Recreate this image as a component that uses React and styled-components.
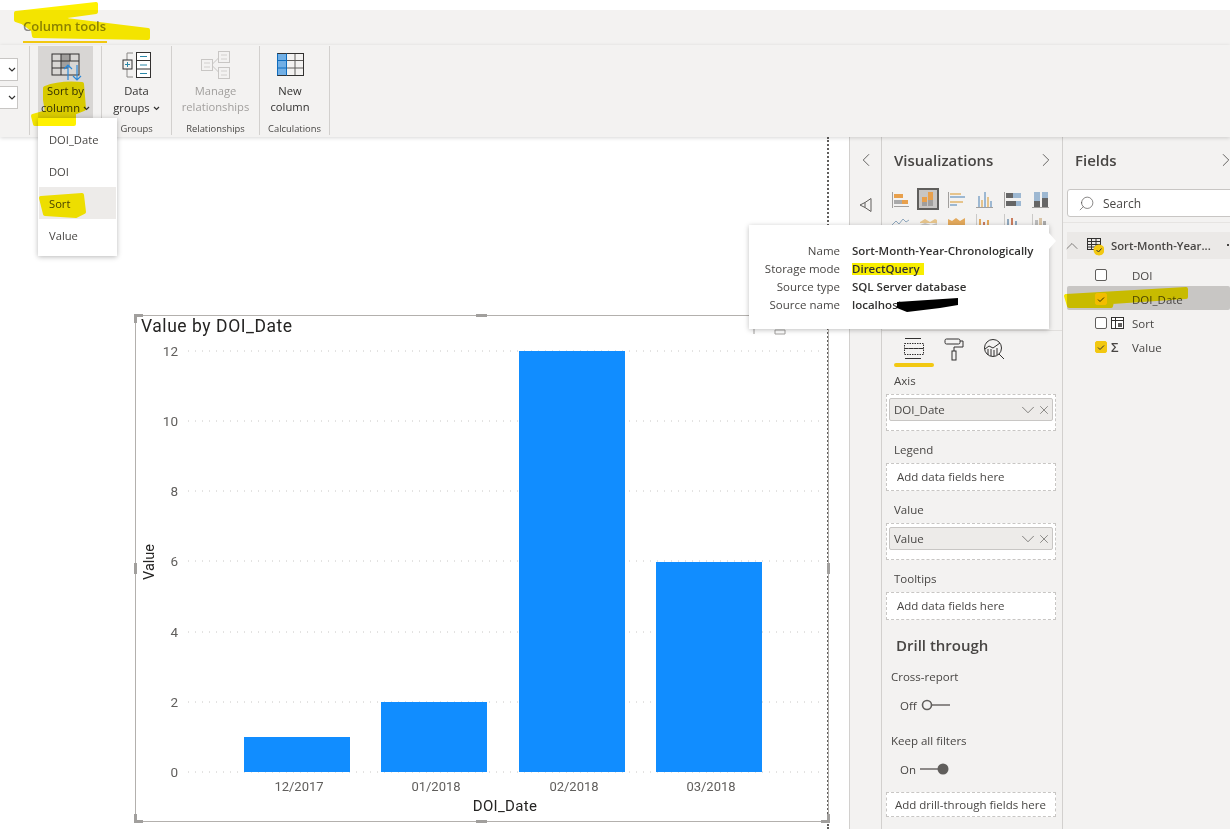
import React from "react";
import styled, { createGlobalStyle } from "styled-components";
import { ChevronLeft, ChevronRight, ChevronUp, ChevronDown, X, Search } from "lucide-react";

const Global = createGlobalStyle`
  html, body { margin: 0; padding: 0; background: #fff; }
  body { font-family: "Open Sans", "Noto Sans", sans-serif; color: #323130; overflow: hidden; }
  * { box-sizing: border-box; }
`;

const Page = styled.div`
  position: relative;
  width: 1230px;
  height: 829px;
  overflow: hidden;
  display: flex;
  flex-direction: column;
  padding-top: 10px;
`;
const TabBar = styled.div`
  height: 35px;
  background: #f3f2f1;
  padding: 0 23px;
  flex: none;
`;
const Tab = styled.div`
  display: inline-block;
  height: 33px;
  font-size: 13px;
  line-height: 32px;
  font-weight: 600;
  color: #8a8886;
  border-bottom: 2px solid #f2c811;
  width: 84px;
  white-space: nowrap;
`;
const Ribbon = styled.div`
  flex: none;
  height: 92px;
  background: #f3f2f1;
  display: flex;
  box-shadow: 0 1px 4px rgba(0, 0, 0, 0.16);
  position: relative;
  z-index: 2;
`;
const Group = styled.div`
  width: ${(p) => p.$w}px;
  display: flex;
  flex-direction: column;
  border-right: 1px solid #d2d0ce;
  margin: 1px 0 2px;
  position: relative;
`;
const Buttons = styled.div`
  flex: 1;
  display: flex;
  justify-content: ${(p) => (p.$left ? "flex-start" : "center")};
`;
const RibbonButton = styled.div`
  width: ${(p) => p.$w}px;
  margin-left: ${(p) => p.$ml || 0}px;
  height: 72px;
  padding-top: 6px;
  background: ${(p) => (p.$on ? "#d8d6d4" : "transparent")};
  display: flex;
  flex-direction: column;
  align-items: center;
  font-size: 11.2px;
  line-height: 16px;
  text-align: center;
  white-space: nowrap;
  color: ${(p) => (p.$off ? "#a19f9d" : "#323130")};
  svg { flex: none; overflow: visible; }
`;
const ButtonIcon = styled.div`
  height: 25px;
  margin-bottom: 6px;
  display: flex;
  justify-content: center;
  align-items: center;
`;
const GroupLabel = styled.div`
  height: 18px;
  font-size: 9.4px;
  line-height: 22px;
  text-align: center;
  color: #484644;
  white-space: nowrap;
`;
const Stubs = styled.div`
  display: flex;
  flex-direction: column;
  gap: 5px;
  padding-top: 12px;
`;
const Stub = styled.div`
  width: 18px;
  height: 23px;
  background: #fff;
  border: 1px solid #c8c6c4;
  border-left: none;
  display: flex;
  align-items: center;
  justify-content: flex-end;
  padding-right: 1px;
  color: #323130;
`;
const TinyCaret = styled.span`
  display: inline-block;
  margin-left: 3px;
  vertical-align: 1px;
`;
const Workspace = styled.div`
  flex: 1;
  min-height: 0;
  display: flex;
`;
const CanvasArea = styled.div`
  width: 850px;
  flex: none;
  background: #fff;
  border-right: 1px solid #d2d0ce;
  display: flex;
`;
const Report = styled.div`
  width: 829px;
  height: 100%;
  border-right: 2px dotted #605e5c;
  padding: 178px 0 0 135px;
`;
const Frame = styled.div`
  position: relative;
  width: 694px;
  height: 507px;
  border: 1px solid #b3b0ad;
  svg { display: block; }
`;
const Handle = styled.span`
  position: absolute;
  background: #a19f9d;
  ${(p) => p.$css}
`;
const Corner = styled.span`
  position: absolute;
  width: 9px;
  height: 9px;
  ${(p) => p.$css}
`;
const Strip = styled.div`
  width: 32px;
  flex: none;
  background: #f3f2f1;
  border-right: 1px solid #d2d0ce;
  display: flex;
  flex-direction: column;
  align-items: center;
  padding-top: 12px;
  gap: 27px;
  color: #484644;
`;
const Pane = styled.div`
  width: 181px;
  flex: none;
  background: #f3f2f1;
  border-right: 1px solid #d2d0ce;
  display: flex;
  flex-direction: column;
`;
const PaneHeader = styled.div`
  height: 46px;
  flex: none;
  display: flex;
  align-items: center;
  justify-content: space-between;
  padding: 0 ${(p) => p.$pr}px 0 12px;
  font-size: 15px;
  font-weight: 600;
  color: #484644;
`;
const VizGrid = styled.div`
  height: 147px;
  flex: none;
  padding: 7px 0 0 7px;
  display: grid;
  grid-template-columns: repeat(6, 28px);
  grid-auto-rows: 22px;
  align-content: start;
`;
const VizCell = styled.div`
  width: 22px;
  height: 22px;
  display: flex;
  align-items: center;
  justify-content: center;
  margin-top: -2px;
  border: 2px solid ${(p) => (p.$on ? "#5f5e5c" : "transparent")};
  background: ${(p) => (p.$on ? "#c8c6c4" : "transparent")};
  svg { flex: none; }
`;
const Tabs = styled.div`
  height: 36px;
  flex: none;
  display: flex;
  padding: 7px 0 0 12px;
  border-top: 1px solid #e1dfdd;
  margin-bottom: 7px;
`;
const TabIcon = styled.div`
  width: 40px;
  height: 29px;
  display: flex;
  flex-direction: column;
  align-items: center;
  gap: 2px;
  svg { flex: none; }
`;
const TabBarMark = styled.div`
  width: 40px;
  height: 4px;
  border-radius: 2px;
  background: ${(p) => (p.$on ? "#f2c811" : "transparent")};
`;
const WellLabel = styled.div`
  height: 16px;
  flex: none;
  font-size: 11.5px;
  line-height: 16px;
  padding-left: 12px;
  color: #484644;
`;
const Well = styled.div`
  flex: none;
  margin: 5px 0 11px 4px;
  width: 170px;
  height: ${(p) => p.$h}px;
  background: #fff;
  border: 1px dashed #c8c6c4;
  padding: ${(p) => (p.$filled ? "3px 2px" : `0 0 0 ${p.$pl || 10}px`)};
  font-size: 11.5px;
  line-height: ${(p) => p.$h - 2}px;
  color: #484644;
  white-space: nowrap;
`;
const Chip = styled.div`
  height: 23px;
  background: #edebe9;
  border: 1px solid #c8c6c4;
  border-radius: 2px;
  display: flex;
  align-items: center;
  padding: 0 1px 0 4px;
  font-size: 11.5px;
  line-height: 20px;
  color: #484644;
  span { flex: 1; }
  svg { flex: none; }
  svg + svg { margin-left: -2px; }
`;
const DrillHead = styled.div`
  flex: none;
  height: 22px;
  margin: 3px 0 13px;
  padding-left: 14px;
  font-size: 15px;
  line-height: 22px;
  font-weight: 600;
  color: #484644;
`;
const ToggleLabel = styled.div`
  flex: none;
  height: 16px;
  padding-left: 9px;
  font-size: 11.5px;
  line-height: 16px;
  color: #484644;
`;
const ToggleRow = styled.div`
  flex: none;
  height: 16px;
  margin: 12px 0 ${(p) => p.$mb}px;
  padding-left: 18px;
  display: flex;
  align-items: center;
  gap: 4px;
  font-size: 11.5px;
  color: #484644;
`;
const FieldsPane = styled.div`
  flex: 1;
  min-width: 0;
  background: #f3f2f1;
  display: flex;
  flex-direction: column;
  overflow: hidden;
`;
const SearchArea = styled.div`
  height: 40px;
  flex: none;
  padding: 6px 0 0 4px;
  border-bottom: 1px solid #e6e4e2;
`;
const SearchBox = styled.div`
  width: 180px;
  height: 28px;
  background: #fff;
  border: 1px solid #c8c6c4;
  border-radius: 3px;
  display: flex;
  align-items: center;
  gap: 8px;
  padding-left: 10px;
  font-size: 12px;
  color: #484644;
`;
const TableRow = styled.div`
  margin: 9px 0 4px 4px;
  height: 27px;
  background: #ebe9e7;
  display: flex;
  align-items: center;
  padding-left: 2px;
  font-size: 11.3px;
  font-weight: 600;
  color: #484644;
  white-space: nowrap;
  position: relative;
  svg { flex: none; }
`;
const Dot = styled.span`
  position: absolute;
  left: 160px;
  top: 12px;
  width: 2px;
  height: 2px;
  background: #484644;
`;
const FieldRow = styled.div`
  height: 24px;
  margin-left: 4px;
  padding-left: 28px;
  padding-top: ${(p) => (p.$sel ? 2 : 0)}px;
  display: flex;
  align-items: center;
  font-size: 11.5px;
  color: #484644;
  background: ${(p) => (p.$sel ? "#c8c6c4" : "transparent")};
  border-radius: 2px;
  position: relative;
  top: ${(p) => (p.$sel ? -1 : 0)}px;
`;
const Check = styled.span`
  width: 12px;
  height: 12px;
  flex: none;
  border-radius: 2px;
  border: 1px solid ${(p) => (p.$on ? "#f2c811" : "#605e5c")};
  background: ${(p) => (p.$on ? "#f2c811" : "#fff")};
  display: flex;
  align-items: center;
  justify-content: center;
`;
const FieldIcon = styled.span`
  width: 25px;
  flex: none;
  padding-left: 4px;
  display: flex;
  align-items: center;
  font-size: 13px;
  font-weight: 600;
`;
const Menu = styled.div`
  position: absolute;
  left: 38px;
  top: 118px;
  width: 79px;
  height: 138px;
  background: #fff;
  box-shadow: 0 1px 5px rgba(0, 0, 0, 0.28);
  padding-top: 5px;
  z-index: 5;
`;
const MenuItem = styled.div`
  height: 32px;
  line-height: 33px;
  padding-left: 10px;
  font-size: 11.2px;
  color: #484644;
  margin: 0 1px;
  background: ${(p) => (p.$on ? "#edebe9" : "transparent")};
`;
const Tip = styled.div`
  position: absolute;
  left: 749px;
  top: 225px;
  width: 300px;
  height: 104px;
  background: #fff;
  box-shadow: 0 1px 5px rgba(0, 0, 0, 0.25);
  padding-top: 17px;
  z-index: 5;
  display: grid;
  grid-template-columns: 91px auto;
  column-gap: 12px;
  grid-auto-rows: 18px;
  font-size: 11.5px;
  line-height: 18px;
  white-space: nowrap;
  &::after {
    content: "";
    position: absolute;
    left: 300px;
    top: 8px;
    border-left: 7px solid #fff;
    border-top: 8px solid transparent;
    border-bottom: 8px solid transparent;
  }
`;
const TipKey = styled.div`
  text-align: right;
  color: #484644;
`;
const TipVal = styled.div`
  font-weight: 600;
  color: #323130;
  overflow: hidden;
`;
const Marked = styled.span`
  background: #f8ee00;
  display: inline-block;
  height: 12px;
  line-height: 12px;
  padding: 0 4px;
  margin-left: -4px;
  font-size: 11.5px;
`;
const Overlay = styled.svg`
  position: absolute;
  left: 0;
  top: 0;
  z-index: 10;
  pointer-events: none;
  mix-blend-mode: multiply;
`;
const YellowInk = styled.path`
  fill: #fff100;
  stroke: #fff100;
  stroke-width: 4;
  stroke-linejoin: round;
`;

const Caret = () => (
  <svg width="7" height="5" viewBox="0 0 7 5"><path d="M1 1l2.5 2.5L6 1" fill="none" stroke="#323130" strokeWidth="1.2" /></svg>
);

const SortIcon = () => (
  <svg width="30" height="24" viewBox="0 0 30 24">
    <rect x="10" y="1" width="9" height="14" fill="#a19f9d" />
    <rect x="1" y="1" width="27" height="21" fill="none" stroke="#323130" />
    <path d="M1 8h27M1 15h16M10 1v21M19 1v7" stroke="#323130" fill="none" />
    <path d="M17 27V12M13 16l4-4 4 4M26 12v15M22 23l4 4 4-4" stroke="#2b88d8" strokeWidth="1.2" fill="none" />
  </svg>
);
const DataGroupsIcon = () => (
  <svg width="29" height="26" viewBox="0 0 29 26">
    <path d="M11 1H5v24h6" fill="none" stroke="#8a8886" />
    <rect x="1" y="8" width="9" height="9" fill="#f3f2f1" stroke="#323130" />
    <path d="M3 12.5h5M5.5 10v5" stroke="#2b88a8" />
    <rect x="14.5" y="0.5" width="14" height="25" fill="#fff" stroke="#323130" />
    <path d="M14.5 8.5h14M14.5 17h14" stroke="#323130" />
    <path d="M18 4.5h7M18 13h7M18 21.5h7" stroke="#2b88a8" strokeWidth="1.2" />
  </svg>
);
const RelIcon = () => (
  <svg width="29" height="28" viewBox="0 0 29 28" fill="none" stroke="#c8c6c4">
    <rect x="0.5" y="8.5" width="11" height="11" />
    <rect x="17.5" y="0.5" width="11" height="11" />
    <rect x="17.5" y="16.5" width="11" height="11" />
    <path d="M11.5 13l6-6M11.5 15l6 6" />
    <path d="M3 12h6M3 16h6M20 4h6M20 8h6M20 20h6M20 24h6" stroke="#d2d0ce" />
  </svg>
);
const NewColIcon = () => (
  <svg width="27" height="23" viewBox="0 0 27 23">
    <rect x="0.5" y="0.5" width="9" height="22" fill="#71afe5" />
    <path d="M9.5 7.5h17M9.5 15h17M18 .5v22" stroke="#605e5c" fill="none" />
    <rect x="0.5" y="0.5" width="26" height="22" fill="none" stroke="#323130" />
    <path d="M9.5.5v22M.5 7.5h9M.5 15h9M.5.5v22" stroke="#0f6cbd" fill="none" />
  </svg>
);
const StubCaret = () => (
  <svg width="8" height="6" viewBox="0 0 8 6"><path d="M1 1l3 3 3-3" fill="none" stroke="#323130" strokeWidth="1.2" /></svg>
);

const O = "#e8a04c", B = "#9db8d2", G = "#a19f9d", T = "#e6c48c", D = "#666";
const vizDefs = [
  [["r", 0, 1, 1, 16, G], ["r", 2, 3, 9, 4, O], ["r", 2, 9, 8, 4, "#aaa"], ["r", 10, 9, 6, 4, O], ["r", 2, 15, 15, 1, G]],
  null,
  [["r", 0, 1, 1, 16, G], ["r", 2, 2, 11, 2, T], ["r", 2, 5, 15, 2, B], ["r", 2, 10, 13, 2, T], ["r", 2, 13, 7, 2, B]],
  [["r", 0, 16, 17, 1, G], ["r", 2, 5, 2, 11, B], ["r", 5, 9, 2, 7, T], ["r", 8, 1, 2, 15, B], ["r", 11, 6, 2, 10, T], ["r", 14, 10, 2, 6, B]],
  [["r", 0, 1, 1, 16, G], ["r", 2, 2, 7, 5, D], ["r", 9, 2, 8, 5, B], ["r", 2, 10, 10, 5, D], ["r", 12, 10, 5, 5, B]],
  [["r", 0, 16, 17, 1, G], ["r", 2, 1, 6, 9, B], ["r", 2, 10, 6, 6, D], ["r", 10, 1, 6, 6, B], ["r", 10, 7, 6, 9, D]],
];
const VizIcon = ({ def }) => (
  <svg width="17" height="17" viewBox="0 0 17 17">
    {def.map((r, i) => <rect key={i} x={r[1]} y={r[2]} width={r[3]} height={r[4]} fill={r[5]} />)}
  </svg>
);
const SelectedViz = () => (
  <svg width="16" height="16" viewBox="0 0 16 16">
    <rect x="2" y="6" width="5" height="9" fill={O} />
    <rect x="2" y="11" width="5" height="4" fill="#a19f9d" />
    <rect x="8" y="1" width="5" height="14" fill={O} />
    <rect x="8" y="9" width="5" height="6" fill="#a19f9d" />
  </svg>
);
const Row2 = [
  <path key="a" d="M0 11l4-4 3 3 4-5 3 3 3-2" fill="none" stroke="#8fa7bd" />,
  <g key="b"><path d="M0 8l5-3 5 3 5-3 2 1v3H0z" fill="#e6c48c" /><path d="M0 11l5-2 6 2 6-2v4H0z" fill="#c8c6c4" /></g>,
  <path key="c" d="M0 5l4 2 4-3 4 3 5-3v9H0z" fill="#e3a95b" />,
  <g key="d"><path d="M0 0v14h17" fill="none" stroke="#a19f9d" /><rect x="3" y="5" width="2" height="9" fill="#e3a95b" /><rect x="7" y="8" width="2" height="6" fill="#c97c5d" /><rect x="11" y="6" width="2" height="8" fill="#e3a95b" /></g>,
  <g key="e"><path d="M0 0v14h17" fill="none" stroke="#a19f9d" /><rect x="3" y="5" width="2" height="9" fill="#8fa7bd" /><rect x="7" y="4" width="2" height="10" fill="#c97c5d" /><rect x="11" y="7" width="2" height="7" fill="#8fa7bd" /></g>,
  <g key="f"><path d="M0 0v14" stroke="#a19f9d" /><rect x="3" y="6" width="3" height="8" fill="#bbb" /><rect x="7" y="4" width="3" height="10" fill="#d8c3a5" /><rect x="11" y="7" width="3" height="7" fill="#aaa" /></g>,
];

const gridY = [36, 106, 176, 246, 317, 387, 457];
const tickV = ["12", "10", "8", "6", "4", "2", "0"];
const bars = [
  { x: 109, top: 422, label: "12/2017" },
  { x: 246, top: 387, label: "01/2018" },
  { x: 384, top: 36, label: "02/2018" },
  { x: 521, top: 247, label: "03/2018" },
];
const Chart = () => (
  <svg width="692" height="505" viewBox="1 1 692 505" fontFamily="Roboto, sans-serif">
    <text x="6" y="17" fontSize="17.5" letterSpacing="0.55" fill="#252423">Value by DOI_Date</text>
    {gridY.map((y, i) => (
      <g key={y}>
        <line x1="53" x2="686" y1={y} y2={y} stroke="#c8c6c4" strokeDasharray="1 6" />
        <text x="43" y={y + 5} textAnchor="end" fontSize="13.5" fill="#605e5c">{tickV[i]}</text>
      </g>
    ))}
    {bars.map((b) => (
      <g key={b.label}>
        <rect x={b.x} y={b.top} width="106" height={457 - b.top} fill="#118dff" />
        <text x={b.x + 55} y="476" textAnchor="middle" fontSize="13" fill="#605e5c">{b.label}</text>
      </g>
    ))}
    <text x="370" y="496" textAnchor="middle" fontSize="15" letterSpacing="0.3" fill="#252423">DOI_Date</text>
    <text transform="translate(19,247) rotate(-90)" textAnchor="middle" fontSize="14.5" fill="#252423">Value</text>
    <path d="M619 14v5M640 15h10v4h-10z" fill="none" stroke="#a19f9d" />
  </svg>
);

const Off = () => (
  <svg width="30" height="12" viewBox="0 0 30 12"><circle cx="6" cy="6" r="4.5" fill="none" stroke="#605e5c" strokeWidth="1.6" /><path d="M11 6h18" stroke="#605e5c" strokeWidth="1.4" /></svg>
);
const On = () => (
  <svg width="30" height="14" viewBox="0 0 30 14"><path d="M0 7h20" stroke="#605e5c" strokeWidth="1.4" /><circle cx="23" cy="7" r="5.5" fill="#605e5c" /></svg>
);
const Tick = ({ c = "#323130" }) => (
  <svg width="8" height="7" viewBox="0 0 8 7"><path d="M1 3.5l2 2 4-4" fill="none" stroke={c} strokeWidth="1" /></svg>
);

const corners = [
  { css: "left:-2px;top:-2px;border-left:3px solid #a19f9d;border-top:3px solid #a19f9d;" },
  { css: "right:-2px;top:-2px;border-right:3px solid #a19f9d;border-top:3px solid #a19f9d;" },
  { css: "left:-2px;bottom:-2px;border-left:3px solid #a19f9d;border-bottom:3px solid #a19f9d;" },
  { css: "right:-2px;bottom:-2px;border-right:3px solid #a19f9d;border-bottom:3px solid #a19f9d;" },
];
const mids = [
  "left:340px;top:-2px;width:11px;height:3px;",
  "left:340px;bottom:-2px;width:11px;height:3px;",
  "left:-2px;top:247px;width:3px;height:11px;",
  "right:-2px;top:247px;width:3px;height:11px;",
];

const ChipControls = () => (
  <>
    <ChevronDown size={22} strokeWidth={0.7} />
    <X size={14} strokeWidth={1} />
  </>
);

export default function App() {
  return (
    <Page>
      <Global />
      <TabBar><Tab>Column tools</Tab></TabBar>
      <Ribbon>
        <Group $w={30}>
          <Stubs><Stub><StubCaret /></Stub><Stub><StubCaret /></Stub></Stubs>
        </Group>
        <Group $w={72}>
          <Buttons $left>
            <RibbonButton $w={55} $ml={8} $on>
              <ButtonIcon><SortIcon /></ButtonIcon>
              <div>Sort by</div>
              <div>column<TinyCaret><Caret /></TinyCaret></div>
            </RibbonButton>
          </Buttons>
          <GroupLabel />
        </Group>
        <Group $w={70}>
          <Buttons>
            <RibbonButton $w={60}>
              <ButtonIcon><DataGroupsIcon /></ButtonIcon>
              <div>Data</div>
              <div>groups<TinyCaret><Caret /></TinyCaret></div>
            </RibbonButton>
          </Buttons>
          <GroupLabel>Groups</GroupLabel>
        </Group>
        <Group $w={88}>
          <Buttons>
            <RibbonButton $w={80} $off>
              <ButtonIcon><RelIcon /></ButtonIcon>
              <div>Manage</div>
              <div>relationships</div>
            </RibbonButton>
          </Buttons>
          <GroupLabel>Relationships</GroupLabel>
        </Group>
        <Group $w={70}>
          <Buttons $left>
            <RibbonButton $w={44} $ml={8}>
              <ButtonIcon><NewColIcon /></ButtonIcon>
              <div>New</div>
              <div>column</div>
            </RibbonButton>
          </Buttons>
          <GroupLabel>Calculations</GroupLabel>
        </Group>
      </Ribbon>
      <Workspace>
        <CanvasArea>
          <Report>
            <Frame>
              <Chart />
              {corners.map((c, i) => <Corner key={i} $css={c.css} />)}
              {mids.map((m, i) => <Handle key={i} $css={m} />)}
            </Frame>
          </Report>
        </CanvasArea>
        <Strip>
          <ChevronLeft size={22} strokeWidth={0.9} />
          <svg width="13" height="14" viewBox="0 0 13 14"><path d="M12 .5v13L6 9.5 1 7l5-2.5z M6 4.5v5" fill="none" stroke="#605e5c" /></svg>
        </Strip>
        <Pane>
          <PaneHeader $pr={5}>
            <span>Visualizations</span>
            <ChevronRight size={22} strokeWidth={0.9} />
          </PaneHeader>
          <VizGrid>
            {vizDefs.map((d, i) => (
              <VizCell key={i} $on={!d}>{d ? <VizIcon def={d} /> : <SelectedViz />}</VizCell>
            ))}
            {Row2.map((g, i) => (
              <VizCell key={i}><svg width="17" height="15" viewBox="0 0 17 15">{g}</svg></VizCell>
            ))}
          </VizGrid>
          <Tabs>
            <TabIcon>
              <svg width="20" height="23" viewBox="0 0 20 23" fill="none" stroke="#323130">
                <path d="M1 .5h16" />
                <path d="M.5 5.5h19v5H.5zM.5 10.5h19v6H.5z" strokeDasharray="1.5 1" />
                <path d="M1 20.5h16" />
              </svg>
              <TabBarMark $on />
            </TabIcon>
            <TabIcon>
              <svg width="20" height="23" viewBox="0 0 20 23" fill="none" stroke="#323130">
                <rect x="1" y="1" width="15" height="5" rx="1.5" />
                <path d="M16 3h3v6h-9v4" />
                <rect x="8" y="13" width="4" height="9" />
              </svg>
              <TabBarMark />
            </TabIcon>
            <TabIcon>
              <svg width="22" height="23" viewBox="0 0 22 23" fill="none" stroke="#323130">
                <circle cx="10" cy="10" r="8.5" />
                <path d="M2 11l4-3 4 2 7-5" />
                <path d="M5 11v6M8 11v7M11 12v6M14 10v7" />
                <path d="M16 16l5 5" />
              </svg>
              <TabBarMark />
            </TabIcon>
          </Tabs>
          <WellLabel>Axis</WellLabel>
          <Well $h={37} $filled>
            <Chip><span>DOI_Date</span><ChipControls /></Chip>
          </Well>
          <WellLabel>Legend</WellLabel>
          <Well $h={28}>Add data fields here</Well>
          <WellLabel>Value</WellLabel>
          <Well $h={37} $filled>
            <Chip><span>Value</span><ChipControls /></Chip>
          </Well>
          <WellLabel>Tooltips</WellLabel>
          <Well $h={28}>Add data fields here</Well>
          <DrillHead>Drill through</DrillHead>
          <ToggleLabel>Cross-report</ToggleLabel>
          <ToggleRow $mb={20}>Off <Off /></ToggleRow>
          <ToggleLabel>Keep all filters</ToggleLabel>
          <ToggleRow $mb={10}>On <On /></ToggleRow>
          <Well $h={25} $pl={8}>Add drill-through fields here</Well>
        </Pane>
        <FieldsPane>
          <PaneHeader $pr={0}>
            <span>Fields</span>
            <ChevronRight size={22} strokeWidth={0.9} style={{ marginRight: -7 }} />
          </PaneHeader>
          <SearchArea>
            <SearchBox><Search size={17} strokeWidth={0.9} style={{ transform: "scaleX(-1)" }} />Search</SearchBox>
          </SearchArea>
          <TableRow>
            <ChevronUp size={20} strokeWidth={0.8} style={{ marginLeft: -7 }} />
            <svg width="18" height="22" viewBox="0 0 18 22" style={{ margin: "0 7px 0 4px" }}>
              <g fill="none" stroke="#323130">
                <rect x="1.5" y="3.5" width="13" height="11" />
                <path d="M1.5 6.5h13M1.5 9.5h13M1.5 12h13M5.5 3.5v11M10 3.5v11" />
              </g>
              <circle cx="13" cy="15" r="5.5" fill="#f2c811" />
              <path d="M10.5 15l2 2 3-3.5" fill="none" stroke="#323130" />
            </svg>
            Sort-Month-Year...
            <Dot />
          </TableRow>
          <FieldRow><Check /><FieldIcon />DOI</FieldRow>
          <FieldRow $sel><Check $on><Tick /></Check><FieldIcon />DOI_Date</FieldRow>
          <FieldRow>
            <Check />
            <FieldIcon>
              <svg width="13" height="12" viewBox="0 0 13 12"><rect x="0.5" y="0.5" width="12" height="11" fill="#fff" stroke="#323130" /><path d="M.5 3.5h12M4.5.5v11" stroke="#323130" /><path d="M7 6h4v4H7z" fill="#605e5c" /></svg>
            </FieldIcon>
            Sort
          </FieldRow>
          <FieldRow><Check $on><Tick /></Check><FieldIcon>Σ</FieldIcon>Value</FieldRow>
        </FieldsPane>
      </Workspace>
      <Menu>
        <MenuItem>DOI_Date</MenuItem>
        <MenuItem>DOI</MenuItem>
        <MenuItem $on>Sort</MenuItem>
        <MenuItem>Value</MenuItem>
      </Menu>
      <Tip>
        <TipKey>Name</TipKey><TipVal>Sort-Month-Year-Chronologically</TipVal>
        <TipKey>Storage mode</TipKey><TipVal><Marked>DirectQuery</Marked></TipVal>
        <TipKey>Source type</TipKey><TipVal>SQL Server database</TipVal>
        <TipKey>Source name</TipKey><TipVal>localhost</TipVal>
      </Tip>
      <Overlay width="1230" height="829" viewBox="0 0 1230 829">
        <YellowInk d="M16 13L96 4L96 12L67 16L66 20L148 30L148 38L34 36L33 30L22 22L16 20Z" />
        <YellowInk d="M45 88Q60 82 82 84L84 109L74 113L74 124L35 124L33 116L47 112L45 100Z" />
        <YellowInk d="M41 198L82 195L84 212L76 216L45 214Z" />
        <YellowInk d="M1066 296L1186 289L1186 297L1112 302L1111 306L1069 306Z" />
        <path d="M897 302L958 298L958 305L940 308L907 312L897 308Z" fill="#000" />
      </Overlay>
    </Page>
  );
}
